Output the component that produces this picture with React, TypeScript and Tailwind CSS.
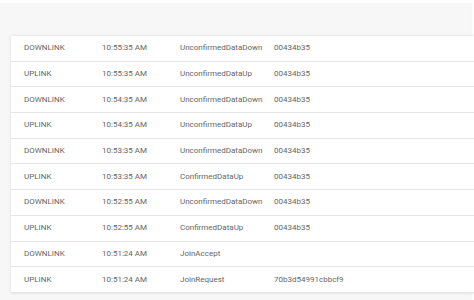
const rows = [
  ["DOWNLINK", "10:55:35 AM", "UnconfirmedDataDown", "00434b35"],
  ["UPLINK", "10:55:35 AM", "UnconfirmedDataUp", "00434b35"],
  ["DOWNLINK", "10:54:35 AM", "UnconfirmedDataDown", "00434b35"],
  ["UPLINK", "10:54:35 AM", "UnconfirmedDataUp", "00434b35"],
  ["DOWNLINK", "10:53:35 AM", "UnconfirmedDataDown", "00434b35"],
  ["UPLINK", "10:53:35 AM", "ConfirmedDataUp", "00434b35"],
  ["DOWNLINK", "10:52:55 AM", "UnconfirmedDataDown", "00434b35"],
  ["UPLINK", "10:52:55 AM", "ConfirmedDataUp", "00434b35"],
  ["DOWNLINK", "10:51:24 AM", "JoinAccept", ""],
  ["UPLINK", "10:51:24 AM", "JoinRequest", "70b3d54991cbbcf9"],
];

export default function App() {
  return (
    <div className="w-[474px] h-[300px] overflow-hidden bg-white" style={{ fontFamily: "Roboto, sans-serif" }}>
      <div className="mt-[3px] w-[471px] h-[297px] bg-[#f7f7f7] shadow-[1px_0_2px_rgba(0,0,0,0.06)] pl-[11px] pt-[33px]">
        <div className="w-[470px] bg-white shadow-[0_0_3px_rgba(0,0,0,0.12)]">
          {rows.map((r, i) => (
            <div key={i} className="flex items-center h-[25.7px] border-b border-[#e6e6e6] pl-[13px] text-[8px] text-[#666]">
              <div className="w-[78px] shrink-0">{r[0]}</div>
              <div className="w-[78px] shrink-0">{r[1]}</div>
              <div className="w-[94px] shrink-0">{r[2]}</div>
              <div>{r[3]}</div>
            </div>
          ))}
        </div>
      </div>
    </div>
  );
}
